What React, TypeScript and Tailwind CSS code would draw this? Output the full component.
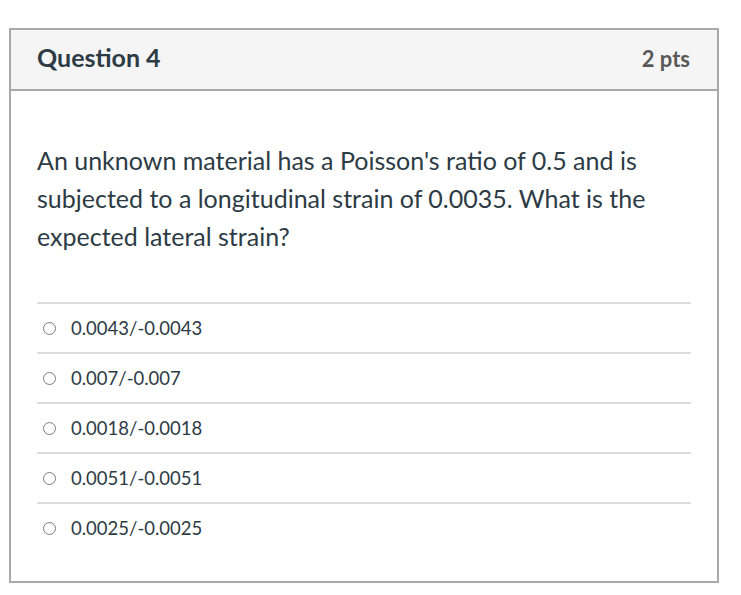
export default function App() {
  const answers = [
    '0.0043/-0.0043',
    '0.007/-0.007',
    '0.0018/-0.0018',
    '0.0051/-0.0051',
    '0.0025/-0.0025',
  ]

  return (
    <main className="min-h-screen bg-white pl-[9px] pt-[28px] font-['Lato',sans-serif]">
      <div className="w-[710px] h-[555px] border-2 border-[#a9a9a9] flex flex-col">
        {/* HEADER */}
        <header className="h-[61px] shrink-0 bg-[#f5f5f5] border-b-2 border-[#a9a9a9] flex items-center justify-between pl-[26px] pr-[27px] pb-[3px]">
          <h2 className="text-[25px] font-bold text-[#2d3b45]">Question 4</h2>
          <span className="text-[22px] font-bold text-[#595959]">2 pts</span>
        </header>

        {/* BODY */}
        <section className="px-[26px] pt-[50px]">
          <p className="text-[25px] leading-[38px] text-[#2d3b45]">
            An unknown material has a Poisson's ratio of 0.5 and is subjected to a longitudinal strain of 0.0035. What is the
            expected lateral strain?
          </p>

          <div className="mt-[47px]">
            {answers.map((a) => (
              <label
                key={a}
                className="h-[50px] border-t-2 border-[#dddddd] flex items-center gap-[15px] pl-[6px] pt-[1px]"
              >
                <span className="w-[13px] h-[13px] rounded-full border border-[#7a7a7a] bg-white shrink-0" />
                <span className="text-[18.5px] text-[#2d3b45]">{a}</span>
              </label>
            ))}
          </div>
        </section>
      </div>
    </main>
  )
}
